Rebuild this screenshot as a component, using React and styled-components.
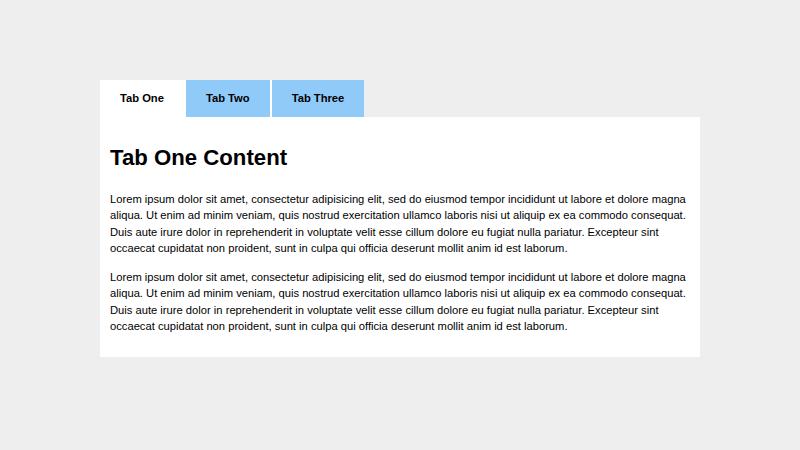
import React, { useState } from 'react'
import styled, { createGlobalStyle } from 'styled-components'

const GlobalStyle = createGlobalStyle`
  body {
    margin: 0;
    background: #eeeeee;
    font-family: "Liberation Sans", Arial, sans-serif;
    color: #000;
  }
`

const Wrapper = styled.div`
  width: 600px;
  margin: 80px auto 0;
`

const TabBar = styled.div`
  display: flex;
`

const Tab = styled.button`
  height: 37px;
  padding: 0 20px 1px;
  border: none;
  background: ${props => (props.active ? '#ffffff' : '#90caf9')};
  font-family: "Liberation Sans", Arial, sans-serif;
  font-size: 11.2px;
  font-weight: bold;
  color: #000;
  cursor: pointer;

  & + & {
    border-left: 2px solid #ffffff;
  }
`

const Panel = styled.div`
  background: #ffffff;
  padding: 10px;

  h2 {
    font-size: 22.2px;
    margin: 18px 0 20px;
    line-height: 1.15;
  }

  p {
    font-size: 11.2px;
    line-height: 16.5px;
    margin: 12px 0;
  }
`

const lorem =
  'Lorem ipsum dolor sit amet, consectetur adipisicing elit, sed do eiusmod tempor incididunt ut labore et dolore magna aliqua. Ut enim ad minim veniam, quis nostrud exercitation ullamco laboris nisi ut aliquip ex ea commodo consequat. Duis aute irure dolor in reprehenderit in voluptate velit esse cillum dolore eu fugiat nulla pariatur. Excepteur sint occaecat cupidatat non proident, sunt in culpa qui officia deserunt mollit anim id est laborum.'

const tabs = ['Tab One', 'Tab Two', 'Tab Three']

const App = () => {
  const [current, setCurrent] = useState(0)

  return (
    <>
      <GlobalStyle />
      <Wrapper>
        <TabBar>
          {tabs.map((name, i) => (
            <Tab key={name} active={i === current} onClick={() => setCurrent(i)}>
              {name}
            </Tab>
          ))}
        </TabBar>
        <Panel>
          <h2>{tabs[current]} Content</h2>
          <p>{lorem}</p>
          <p>{lorem}</p>
        </Panel>
      </Wrapper>
    </>
  )
}

export default App
